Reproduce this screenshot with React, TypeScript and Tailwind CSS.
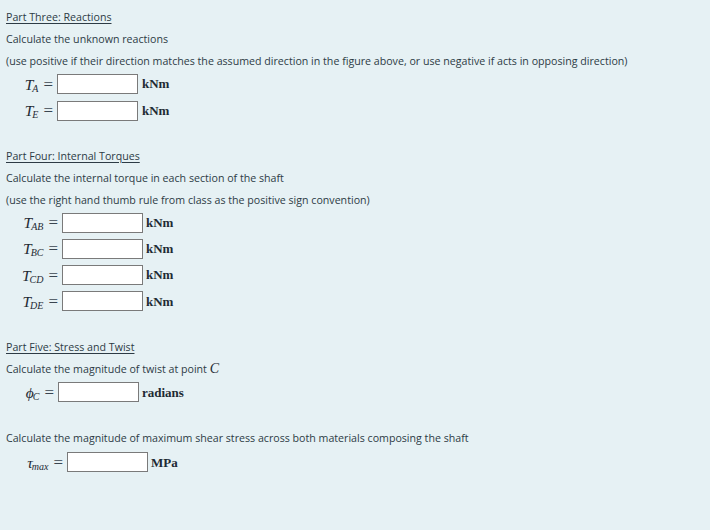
import React from "react";

const TEXT = "font-['Open_Sans',sans-serif] text-[10.65px] leading-[22px] h-[22px] text-[#2d3b45] whitespace-nowrap";
const MATH = "font-['Liberation_Serif',serif] text-[#1e2a33]";

function Sym({ main, sub }: { main: string; sub: string }) {
  return (
    <span className={`${MATH} text-[15.5px] flex items-baseline`}>
      <span className="italic">{main}</span>
      <span className="font-['Liberation_Serif',serif] italic text-[10px] relative top-[2px] -ml-[1px]">{sub}</span>
      <span className="ml-[5px] text-[17px] text-[#3a4550]">=</span>
    </span>
  );
}

function Row({
  main,
  sub,
  unit,
  labelW,
  unitGap = "ml-[3px]",
}: {
  main: string;
  sub: string;
  unit: string;
  labelW: string;
  unitGap?: string;
}) {
  return (
    <div className="flex items-center h-[20px]">
      <div className={`${labelW} flex justify-end pr-[4px] leading-none`}>
        <Sym main={main} sub={sub} />
      </div>
      <input
        type="text"
        className="w-[81px] h-[20px] bg-white border border-[#7a7a7a] outline-none"
      />
      <span className={`${unitGap} ${MATH} font-bold text-[13px]`}>{unit}</span>
    </div>
  );
}

export default function App() {
  return (
    <div className="w-[710px] h-[530px] bg-[#e6f1f4] pl-[6px] pt-[6px] overflow-hidden">
      {/* Part Three */}
      <div className={`${TEXT} underline underline-offset-2`}>Part Three: Reactions</div>
      <div className={TEXT}>Calculate the unknown reactions</div>
      <div className={TEXT}>
        (use positive if their direction matches the assumed direction in the figure above, or use negative if acts in opposing direction)
      </div>
      <div className="flex flex-col gap-[6.5px] mt-[2px] -ml-[6px]">
        <Row main="T" sub="A" unit="kNm" labelW="w-[57px]" unitGap="ml-[4px]" />
        <Row main="T" sub="E" unit="kNm" labelW="w-[57px]" unitGap="ml-[4px]" />
      </div>

      {/* Part Four */}
      <div className={`${TEXT} underline underline-offset-2 mt-[24px]`}>Part Four: Internal Torques</div>
      <div className={TEXT}>Calculate the internal torque in each section of the shaft</div>
      <div className={TEXT}>(use the right hand thumb rule from class as the positive sign convention)</div>
      <div className="flex flex-col gap-[6.3px] mt-[2px] -ml-[6px]">
        <Row main="T" sub="AB" unit="kNm" labelW="w-[62px]" />
        <Row main="T" sub="BC" unit="kNm" labelW="w-[62px]" />
        <Row main="T" sub="CD" unit="kNm" labelW="w-[62px]" />
        <Row main="T" sub="DE" unit="kNm" labelW="w-[62px]" />
      </div>

      {/* Part Five */}
      <div className={`${TEXT} underline underline-offset-2 mt-[25px]`}>Part Five: Stress and Twist</div>
      <div className={TEXT}>
        Calculate the magnitude of twist at point <span className={`${MATH} italic text-[14px]`}>C</span>
      </div>
      <div className="mt-[2px] -ml-[6px]">
        <Row main="ϕ" sub="C" unit="radians" labelW="w-[58px]" />
      </div>

      <div className={`${TEXT} mt-[25px]`}>
        Calculate the magnitude of maximum shear stress across both materials composing the shaft
      </div>
      <div className="mt-[3px] -ml-[6px]">
        <Row main="τ" sub="max" unit="MPa" labelW="w-[67px]" />
      </div>
    </div>
  );
}
